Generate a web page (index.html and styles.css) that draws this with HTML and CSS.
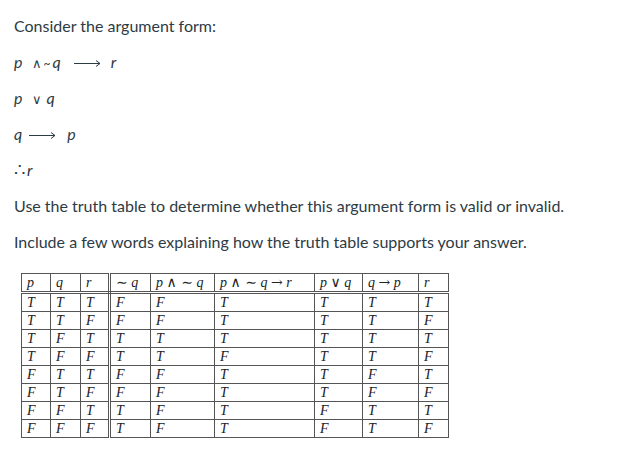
FILE: index.html
```html
<!DOCTYPE html>
<html>
<head>
<meta charset="utf-8">
<link rel="stylesheet" href="styles.css">
</head>
<body>
<div class="content">
  <p>Consider the argument form:</p>
  <p class="formula"><i>p</i><span class="op1">∧</span><span class="tilde">~</span><i>q</i><svg class="arrow arrow1" width="27" height="10" viewBox="0 0 27 10" role="img" aria-label="⟶"><path d="M0 5.5H26M22 2.5L26 5.5L22 8.5" fill="none" stroke="#2d3b45" stroke-width="1"/></svg><i>r</i></p>
  <p class="formula"><i>p</i><span class="op2">∨</span><i>q</i></p>
  <p class="formula"><i>q</i><svg class="arrow arrow2" width="27" height="10" viewBox="0 0 27 10" role="img" aria-label="⟶"><path d="M0 5.5H26M22 2.5L26 5.5L22 8.5" fill="none" stroke="#2d3b45" stroke-width="1"/></svg><i>p</i></p>
  <p class="formula"><span class="therefore">∴</span><i>r</i></p>
  <p>Use the truth table to determine whether this argument form is valid or invalid.</p>
  <p>Include a few words explaining how the truth table supports your answer.</p>
  <table class="truth">
    <colgroup>
      <col class="c1"><col class="c2"><col class="c3"><col class="c4"><col class="c5"><col class="c6"><col class="c7"><col class="c8"><col class="c9">
    </colgroup>
    <thead>
      <tr><th>p</th><th>q</th><th class="dbl">r</th><th><span class="up">∼</span> q</th><th>p <span class="up">∧ ∼</span> q</th><th>p <span class="up">∧ ∼</span> q <span class="up">→</span> r</th><th>p <span class="up">∨</span> q</th><th>q <span class="up">→</span> p</th><th>r</th></tr>
    </thead>
    <tbody>
      <tr><td>T</td><td>T</td><td class="dbl">T</td><td>F</td><td>F</td><td>T</td><td>T</td><td>T</td><td>T</td></tr>
      <tr><td>T</td><td>T</td><td class="dbl">F</td><td>F</td><td>F</td><td>T</td><td>T</td><td>T</td><td>F</td></tr>
      <tr><td>T</td><td>F</td><td class="dbl">T</td><td>T</td><td>T</td><td>T</td><td>T</td><td>T</td><td>T</td></tr>
      <tr><td>T</td><td>F</td><td class="dbl">F</td><td>T</td><td>T</td><td>F</td><td>T</td><td>T</td><td>F</td></tr>
      <tr><td>F</td><td>T</td><td class="dbl">T</td><td>F</td><td>F</td><td>T</td><td>T</td><td>F</td><td>T</td></tr>
      <tr><td>F</td><td>T</td><td class="dbl">F</td><td>F</td><td>F</td><td>T</td><td>T</td><td>F</td><td>F</td></tr>
      <tr><td>F</td><td>F</td><td class="dbl">T</td><td>T</td><td>F</td><td>T</td><td>F</td><td>T</td><td>T</td></tr>
      <tr><td>F</td><td>F</td><td class="dbl">F</td><td>T</td><td>F</td><td>T</td><td>F</td><td>T</td><td>F</td></tr>
    </tbody>
  </table>
</div>
</body>
</html>
```
FILE: styles.css
```css
html, body {
  margin: 0;
  padding: 0;
  background: #ffffff;
}
.content {
  padding: 2px 14px 0 14px;
  font-family: Lato, "Open Sans", sans-serif;
  font-size: 16px;
  line-height: 24px;
  color: #2d3b45;
}
.content p {
  margin: 12px 0;
}
.formula {
  height: 24px;
}
.formula span {
  line-height: 1;
}
.formula i {
  font-style: italic;
}
.op1 {
  margin-left: 10px;
  margin-right: 1px;
  font-size: 13px;
}
.op2 {
  margin-left: 10px;
  margin-right: 4px;
  font-size: 13px;
}
.tilde {
  font-size: 12px;
  margin-right: 2px;
}
.arrow {
  vertical-align: 0;
}
.arrow1 {
  margin-left: 13px;
  margin-right: 10px;
}
.arrow2 {
  margin-left: 7px;
  margin-right: 11px;
}
.therefore {
  font-size: 18px;
  margin-right: 2px;
}
.truth {
  margin-top: 19px;
  margin-left: 7px;
  border-collapse: collapse;
  border: 1px solid #555;
  font-family: "Liberation Serif", "DejaVu Serif", serif;
  font-style: italic;
  font-size: 14px;
  line-height: 16px;
  color: #222;
}
.truth th, .truth td {
  border: 1px solid #555;
  padding: 0 5px;
  height: 17px;
  text-align: left;
  font-weight: normal;
  white-space: nowrap;
  font-family: "Liberation Serif", "DejaVu Serif", serif;
}
.truth thead th {
  border-bottom: 3px double #555;
}
.truth .dbl {
  border-right: 3px double #555;
}
.up {
  font-style: normal;
  font-family: "DejaVu Serif", serif;
  font-size: 14px;
  line-height: 1;
}
.c1 { width: 29px; }
.c2 { width: 30px; }
.c3 { width: 29px; }
.c4 { width: 41px; }
.c5 { width: 64px; }
.c6 { width: 100px; }
.c7 { width: 48px; }
.c8 { width: 56px; }
.c9 { width: 30px; }
```
